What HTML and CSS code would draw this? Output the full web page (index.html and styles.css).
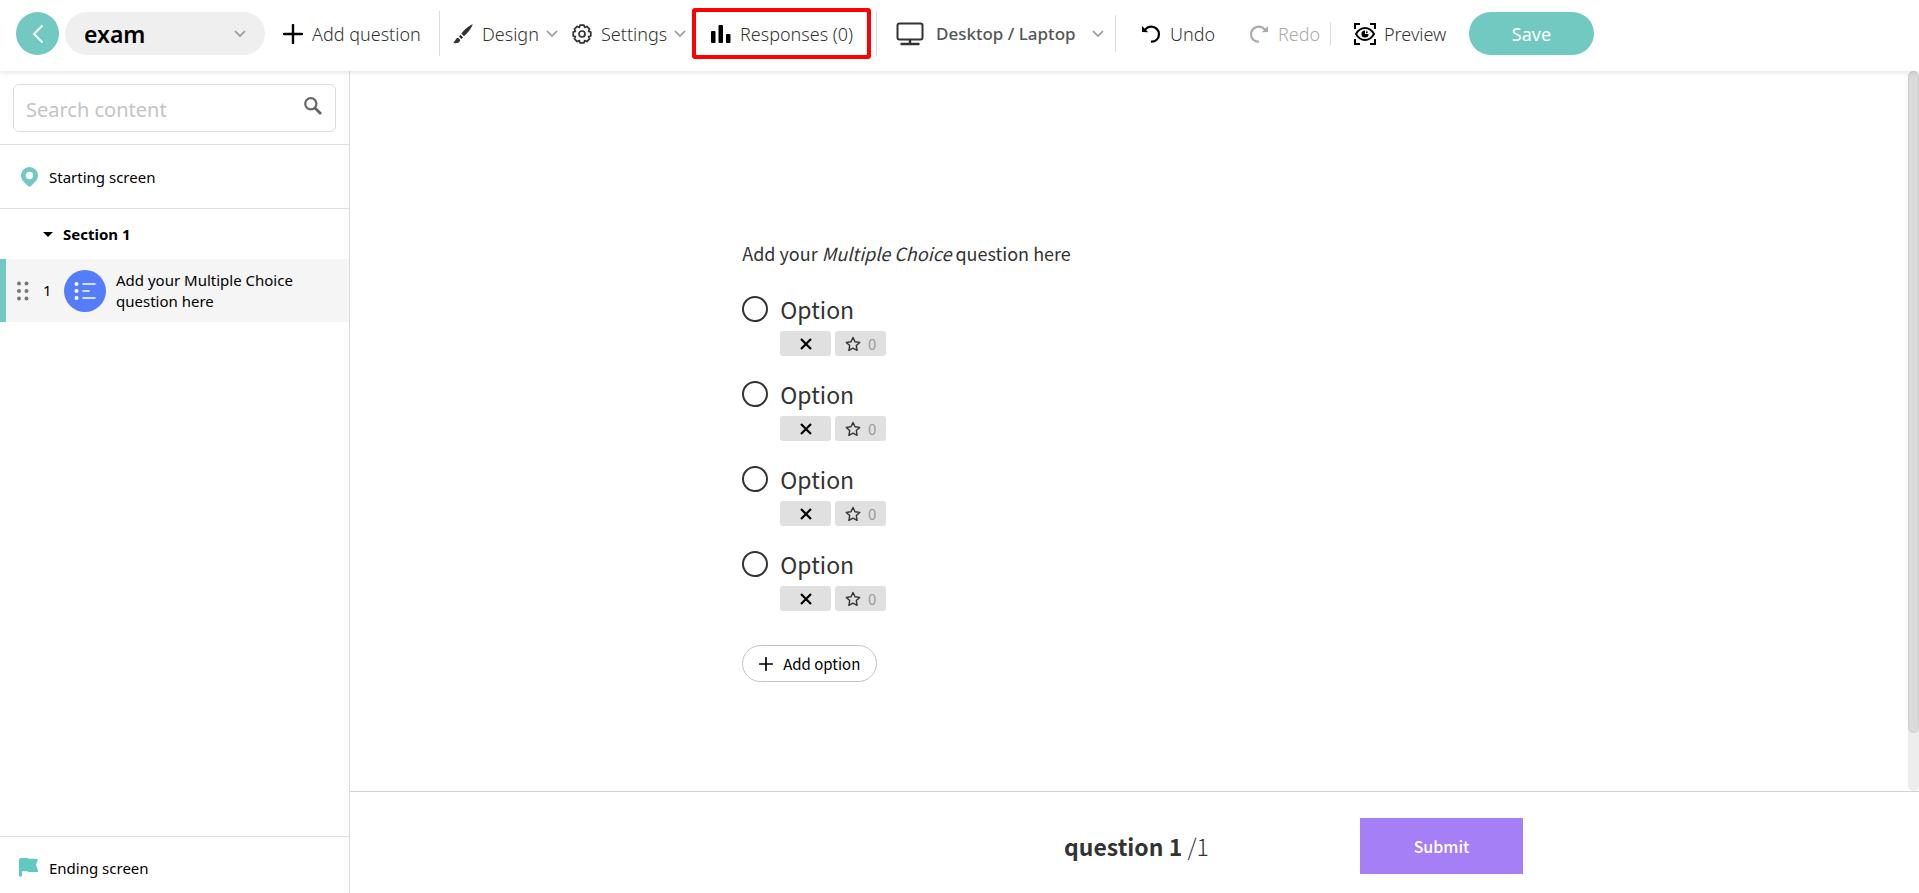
FILE: index.html
```html
<!DOCTYPE html>
<html lang="en">

<head>
  <meta charset="UTF-8">
  <meta name="viewport" content="width=device-width, initial-scale=1.0">
  <title>exam</title>
  <link rel="stylesheet" href="styles.css">
</head>

<body>

  <!-- shared icons -->
  <svg class="sprite" aria-hidden="true">
    <symbol id="chevron" viewBox="0 0 12 8">
      <path d="M1 1l5 5 5-5" fill="none" stroke="currentColor" stroke-width="1.700" />
    </symbol>
    <symbol id="plus" viewBox="0 0 20 20">
      <path d="M10 1v18M1 10h18" fill="none" stroke="currentColor" stroke-width="2.4" stroke-linecap="round" />
    </symbol>
    <symbol id="cross" viewBox="0 0 12 12">
      <path d="M1 1l10 10M11 1L1 11" fill="none" stroke="currentColor" stroke-width="2.2" />
    </symbol>
    <symbol id="star" viewBox="0 0 16 16">
      <path d="M8 1.5l2 4.2 4.7.7-3.4 3.2.8 4.8L8 12.2l-4.1 2.2.8-4.8L1.3 6.400l4.700-.7z" fill="none" stroke="currentColor" stroke-width="1.4" stroke-linejoin="round" />
    </symbol>
    <symbol id="redo" viewBox="0 0 20 20">
      <path d="M10 17.700C5.500 18 2 14.500 2 10.300 2 6 5.400 2.700 9.500 2.700c3 0 5.200 1.300 6.800 3.800" fill="none" stroke="currentColor" stroke-width="2.200" />
      <path d="M19 2v6l-6.200.2z" fill="currentColor" />
    </symbol>
  </svg>

  <header class="topbar">
    <button class="back" aria-label="Back">
      <svg width="12" height="20" viewBox="0 0 12 20"><path d="M10.500 1.500L2 10l8.500 8.500" fill="none" stroke="#fff" stroke-width="2" /></svg>
    </button>
    <button class="title">exam <svg class="chevron"><use href="#chevron" /></svg></button>
    <button class="tool add-question"><svg class="icon black"><use href="#plus" /></svg>Add question</button>
    <span class="divider"></span>
    <button class="tool design">
      <svg class="icon" viewBox="0 0 20 20">
        <path d="M19.800.3c-3.600 1.200-8.800 5.600-11.500 9.300l2.700 2.700C14.400 9.400 18.500 4.300 19.800.3zM7.400 10.700c-.7.800-1 1.400-1.300 2l2.200 2.200c.7-.3 1.200-.7 1.900-1.400zM5.200 13.800C2.600 14 3 16.600.2 18.800c3 1 6.700 0 7-2.900z" fill="currentColor" />
      </svg>Design <svg class="chevron"><use href="#chevron" /></svg>
    </button>
    <button class="tool settings">
      <svg class="icon" viewBox="0 0 20 20" fill="none" stroke="currentColor" stroke-width="1.700">
        <path d="M8 1.200h4l.6 2.200 2.200-1 2.800 2.800-1 2.200 2.200.6v4l-2.200.6 1 2.200-2.800 2.800-2.200-1-.6 2.200H8l-.6-2.200-2.200 1-2.800-2.800 1-2.200L1.200 12V8l2.200-.6-1-2.200 2.800-2.800 2.200 1z" stroke-linejoin="round" />
        <circle cx="10" cy="10" r="3" />
      </svg>Settings <svg class="chevron"><use href="#chevron" /></svg>
    </button>
    <button class="tool responses">
      <svg class="icon black" viewBox="0 0 20 20" fill="currentColor">
        <rect x="0" y="7" width="4.500" height="12" rx="1" />
        <rect x="7.500" y="1" width="4.500" height="18" rx="1" />
        <rect x="15" y="10" width="4.500" height="9" rx="1" />
      </svg>Responses (0)
    </button>
    <span class="divider"></span>
    <button class="tool device">
      <svg class="monitor" viewBox="0 0 28 24" fill="none" stroke="currentColor">
        <rect x="1.500" y="1.500" width="25" height="16" rx="2" stroke-width="2" />
        <path d="M14 18v4M5.500 22h17" stroke-width="2.400" stroke-linecap="round" />
      </svg>Desktop / Laptop <svg class="chevron"><use href="#chevron" /></svg>
    </button>
    <span class="divider medium"></span>
    <button class="tool undo"><svg class="icon black flip"><use href="#redo" /></svg>Undo</button>
    <button class="tool redo" disabled><svg class="icon"><use href="#redo" /></svg>Redo</button>
    <span class="divider small"></span>
    <button class="tool preview">
      <svg class="eye" viewBox="0 0 22 22" fill="none" stroke="#000" stroke-width="2">
        <path d="M1 6V1h5M16 1h5v5M21 16v5h-5M6 21H1v-5" />
        <path d="M2 11c4.600-8 13.400-8 18 0-4.600 8-13.400 8-18 0z" />
        <path d="M11 7.400a3.600 3.600 0 1 0 3.600 3.600L11 11z" fill="#000" stroke="none" />
        <circle cx="12.800" cy="9.300" r="1" fill="#000" stroke="none" />
      </svg>Preview
    </button>
    <button class="save">Save</button>
  </header>

  <div class="layout">
    <aside class="sidebar">
      <div class="search">
        <input type="text" class="search-input" aria-label="Search content" placeholder="Search content">
        <svg class="search-icon" viewBox="0 0 18 18" fill="none" stroke="#666">
          <circle cx="6.800" cy="6.800" r="5.600" stroke-width="2.200" />
          <path d="M11 11l6 6" stroke-width="2.800" />
        </svg>
      </div>

      <a href="#start" class="screen-link">
        <svg class="pin" viewBox="0 0 17 20"><path d="M8.500 0A8.400 8.400 0 0 0 0 8.500C0 13 3.500 15.500 7 19q1.500 1.300 3 0c3.500-3.500 7-6 7-10.500A8.400 8.400 0 0 0 8.500 0zm0 12.200a3.700 3.700 0 1 1 0-7.400 3.700 3.700 0 0 1 0 7.400z" fill="currentColor" /></svg>
        Starting screen
      </a>

      <button class="section"><span class="caret"></span>Section 1</button>

      <a href="#question1" class="question-item">
        <svg class="drag" viewBox="0 0 12 20" fill="#777">
          <circle cx="2" cy="2.500" r="2" /><circle cx="9.500" cy="2.500" r="2" />
          <circle cx="2" cy="10" r="2" /><circle cx="9.500" cy="10" r="2" />
          <circle cx="2" cy="17.500" r="2" /><circle cx="9.500" cy="17.500" r="2" />
        </svg>
        <span class="number">1</span>
        <svg class="type-icon" viewBox="0 0 42 42">
          <circle cx="21" cy="21" r="21" fill="#567df9" />
          <g fill="#fff"><circle cx="12.500" cy="14" r="2" /><circle cx="12.500" cy="21" r="2" /><circle cx="12.500" cy="28" r="2" /></g>
          <path d="M19 14h12M19 21h6M19 28h12" stroke="#fff" stroke-width="1.600" stroke-linecap="round" />
        </svg>
        <span>Add your Multiple Choice question here</span>
      </a>

      <a href="#end" class="screen-link ending">
        <svg class="flag" viewBox="0 0 19 19"><path d="M0 2Q0 0 2 0h6q1 0 2 .8h7.500q1.500 0 1 1.400L17 7l2 5.500q.3 1.500-1 1.500H10q-1 0-2-.8H3V18q-1.500 1.500-3 0z" fill="currentColor" /></svg>
        Ending screen
      </a>
    </aside>

    <main class="main">
      <div class="canvas">
        <form class="question" id="question1">
          <p class="question-text">Add your <em>Multiple Choice</em> question here</p>

          <div class="option">
            <input type="radio" name="answer" id="option1">
            <label for="option1">Option</label>
            <div class="option-tools">
              <button type="button" aria-label="Remove option"><svg class="cross"><use href="#cross" /></svg></button>
              <button type="button"><svg class="star"><use href="#star" /></svg>0</button>
            </div>
          </div>
          <div class="option">
            <input type="radio" name="answer" id="option2">
            <label for="option2">Option</label>
            <div class="option-tools">
              <button type="button" aria-label="Remove option"><svg class="cross"><use href="#cross" /></svg></button>
              <button type="button"><svg class="star"><use href="#star" /></svg>0</button>
            </div>
          </div>
          <div class="option">
            <input type="radio" name="answer" id="option3">
            <label for="option3">Option</label>
            <div class="option-tools">
              <button type="button" aria-label="Remove option"><svg class="cross"><use href="#cross" /></svg></button>
              <button type="button"><svg class="star"><use href="#star" /></svg>0</button>
            </div>
          </div>
          <div class="option">
            <input type="radio" name="answer" id="option4">
            <label for="option4">Option</label>
            <div class="option-tools">
              <button type="button" aria-label="Remove option"><svg class="cross"><use href="#cross" /></svg></button>
              <button type="button"><svg class="star"><use href="#star" /></svg>0</button>
            </div>
          </div>

          <button type="button" class="add-option"><svg class="small-plus"><use href="#plus" /></svg>Add option</button>
        </form>
        <div class="scroll-track"><div class="scroll-thumb"></div></div>
      </div>

      <footer class="footer">
        <p class="counter"><strong>question 1</strong> /1</p>
        <button class="submit">Submit</button>
      </footer>
    </main>
  </div>

</body>

</html>
```
FILE: styles.css
```css
* {
  box-sizing: border-box;
}

body {
  margin: 0;
  height: 100vh;
  display: flex;
  flex-direction: column;
  font-family: 'Noto Sans', sans-serif;
  color: #000;
  background-color: #fff;
}

button {
  font-family: inherit;
  border: 0;
  padding: 0;
  background: none;
  cursor: pointer;
}

a {
  color: inherit;
  text-decoration: none;
}

svg {
  flex: none;
}

.sprite {
  display: none;
}

/* top bar */

.topbar {
  display: flex;
  align-items: center;
  height: 71px;
  flex: none;
  padding: 12px 16px 16px;
  box-shadow: 0 1px 6px rgba(0, 0, 0, 0.12);
  z-index: 1;
}

.back {
  width: 43px;
  height: 43px;
  border-radius: 50%;
  background-color: #72c9c1;
  display: flex;
  align-items: center;
  justify-content: center;
}

.title {
  width: 200px;
  height: 43px;
  margin-left: 6px;
  padding: 0 19px;
  border-radius: 22px;
  background-color: #efefef;
  display: flex;
  align-items: center;
  justify-content: space-between;
  font-size: 23px;
  font-weight: 600;
}

.chevron {
  width: 12px;
  height: 8px;
  color: #999;
}

.tool {
  display: flex;
  align-items: center;
  height: 43px;
  font-size: 18px;
  font-weight: 300;
  color: #333;
  white-space: nowrap;
}

.icon {
  width: 20px;
  height: 20px;
  margin-right: 9px;
  color: #333;
}

.tool .chevron {
  margin-left: 7px;
}

.black {
  color: #000;
}

.flip {
  transform: scaleX(-1);
}

.divider {
  width: 1px;
  height: 45px;
  background-color: #ddd;
}

.medium {
  height: 37px;
}

.small {
  height: 23px;
}

.add-question {
  width: 174px;
  padding-left: 18px;
}

.design {
  width: 132px;
  padding-left: 13px;
}

.settings {
  width: 120px;
}

.responses {
  width: 179px;
  height: 51px;
  margin-right: 5px;
  padding-left: 15px;
  border: 4px solid #f00;
  border-radius: 3px;
}

.device {
  width: 238px;
  padding-left: 19px;
  font-size: 17px;
  font-weight: 500;
  color: #555;
}

.monitor {
  width: 28px;
  height: 24px;
  margin-right: 12px;
  color: #333;
}

.device .chevron {
  margin-left: 16px;
}

.undo {
  width: 133px;
  padding-left: 25px;
}

.redo {
  width: 81px;
}

.redo,
.redo .icon {
  color: #aaa;
}

.preview {
  width: 138px;
  padding-left: 23px;
}

.eye {
  width: 22px;
  height: 22px;
  margin-right: 8px;
}

.save {
  width: 125px;
  height: 43px;
  border-radius: 22px;
  background-color: #72c9c1;
  color: #fff;
  font-size: 18px;
}

/* sidebar */

.layout {
  flex: 1;
  display: flex;
  min-height: 0;
}

.sidebar {
  width: 350px;
  flex: none;
  display: flex;
  flex-direction: column;
  border-right: 1px solid #ddd;
  font-size: 15px;
}

.search {
  display: flex;
  align-items: center;
  height: 48px;
  margin: 13px;
  margin-bottom: 12px;
  padding: 0 13px 0 12px;
  border: 1px solid #ddd;
  border-radius: 6px;
}

.search-input {
  flex: 1;
  min-width: 0;
  padding: 2px 0 0;
  border: 0;
  outline: 0;
  font-family: inherit;
  font-size: 20px;
}

.search-input::placeholder {
  color: #c4c4c4;
}

.search-icon {
  width: 18px;
  height: 18px;
  margin-bottom: 4px;
}

.screen-link {
  display: flex;
  align-items: center;
  gap: 11px;
  height: 64px;
  padding: 1px 21px 0;
  border-top: 1px solid #ddd;
}

.pin {
  width: 17px;
  height: 20px;
  color: #72c9c1;
}

.flag {
  width: 19px;
  height: 19px;
  color: #60cac0;
}

.section {
  display: flex;
  align-items: center;
  gap: 10px;
  height: 51px;
  padding-left: 43px;
  border-top: 1px solid #ddd;
  font-size: 15px;
  font-weight: 700;
}

.caret {
  border: 5px solid transparent;
  border-top-color: #000;
  border-bottom: 0;
}

.question-item {
  display: flex;
  align-items: center;
  height: 63px;
  padding-left: 11px;
  border-left: 6px solid #72c9c1;
  background-color: #f5f5f5;
  line-height: 21px;
}

.drag {
  width: 12px;
  height: 20px;
}

.number {
  flex: none;
  width: 35px;
  padding-left: 14px;
}

.type-icon {
  width: 42px;
  height: 42px;
  margin-right: 10px;
}

.question-item span:last-child {
  width: 200px;
}

.ending {
  height: 57px;
  margin-top: auto;
  padding: 5px 19px 0;
}

/* question editor */

.main {
  flex: 1;
  display: flex;
  flex-direction: column;
  font-family: 'Noto Sans CJK SC', sans-serif;
  color: #333;
}

.canvas {
  flex: 1;
  display: flex;
  justify-content: space-between;
}

.question {
  width: 46%;
  margin-left: 25%;
  padding-top: 167px;
}

.question-text {
  margin: 0 0 27px;
  font-size: 18px;
  line-height: 30px;
}

.option {
  display: grid;
  grid-template-columns: 26px 1fr;
  column-gap: 12px;
  height: 85px;
  align-content: start;
}

.option input {
  appearance: none;
  width: 26px;
  height: 26px;
  margin: 1px 0 0;
  border: 2px solid #333;
  border-radius: 50%;
}

.option label {
  font-size: 23px;
  line-height: 28px;
  margin-bottom: 8px;
}

.option-tools {
  grid-column: 2;
  display: flex;
  gap: 4px;
}

.option-tools button {
  width: 51px;
  height: 25px;
  border-radius: 3px;
  background-color: #e0e0e0;
  display: flex;
  align-items: center;
  justify-content: center;
  gap: 7px;
  font-size: 15px;
  color: #999;
}

.cross {
  width: 12px;
  height: 12px;
  color: #000;
}

.star {
  width: 16px;
  height: 16px;
  color: #333;
}

.add-option {
  display: flex;
  align-items: center;
  justify-content: center;
  gap: 10px;
  width: 135px;
  height: 37px;
  margin-top: 10px;
  border: 1px solid #c4c4c4;
  border-radius: 19px;
  font-size: 15px;
  color: #000;
}

.small-plus {
  width: 14px;
  height: 14px;
  stroke-width: 3;
}

.scroll-track {
  width: 11px;
  border-radius: 6px;
  background-color: #ededed;
}

.scroll-thumb {
  height: 92%;
  border: 1px solid #ccc;
  border-radius: 6px;
  background-color: #dbdbdb;
}

.footer {
  display: flex;
  align-items: center;
  justify-content: flex-end;
  height: 102px;
  padding-top: 6px;
  padding-right: 396px;
  border-top: 1px solid #d2d2d2;
}

.counter {
  margin: 0;
  width: 296px;
  font-size: 23px;
  font-weight: 300;
}

.counter strong {
  font-weight: 700;
}

.submit {
  width: 163px;
  height: 56px;
  background-color: #a47ff6;
  color: #fff;
  font-size: 16px;
  font-weight: 500;
}
```
